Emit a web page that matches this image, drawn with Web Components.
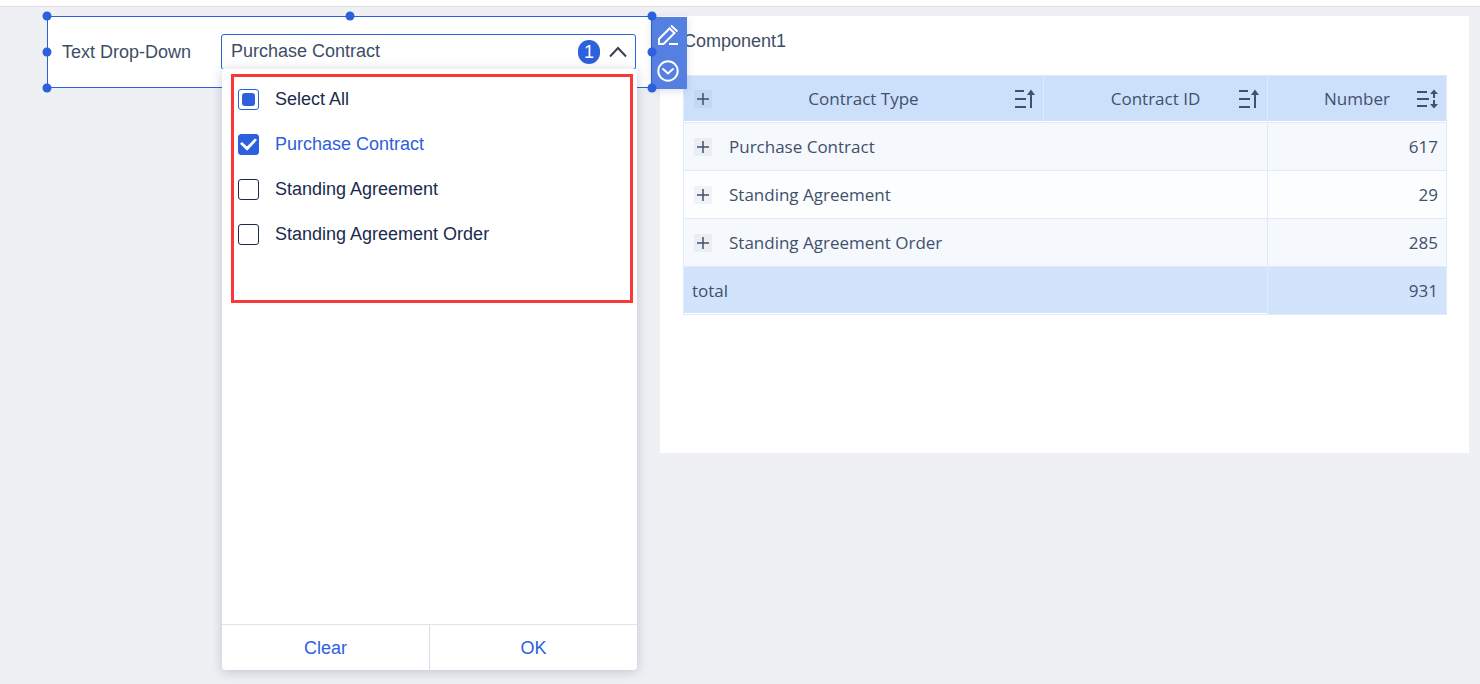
<!DOCTYPE html>
<html lang="en">
<head>
<meta charset="utf-8">
<meta name="viewport" content="width=device-width, initial-scale=1">
<title>Dashboard</title>
<style>
  html, body { height: 100%; }
  body {
    margin: 0;
    background: #eff0f4;
    color: #3d4d66;
    font-family: "Liberation Sans", Arial, sans-serif;
    font-size: 18px;
  }
</style>
</head>
<body>
<dashboard-page>
  <filter-widget slot="filter" label="Text Drop-Down" value="Purchase Contract" count="1">
    <check-option state="mixed">Select All</check-option>
    <check-option state="on">Purchase Contract</check-option>
    <check-option>Standing Agreement</check-option>
    <check-option>Standing Agreement Order</check-option>
  </filter-widget>
  <table-card slot="table">
    <span slot="title">Component1</span>
    <contract-table></contract-table>
  </table-card>
</dashboard-page>

<script>
class DashboardPage extends HTMLElement {
    constructor() {
        super();
        this.attachShadow({mode: "open"}).innerHTML = `
        <style>
        :host { display: block; }
        header {
            height: 6px;
            background: #fff;
            border-bottom: 1px solid #dcdee4;
        }
        main {
            display: grid;
            grid-template-columns: minmax(0, 605fr) minmax(0, 809fr);
            align-items: start;
            gap: 8px;
            padding: 9px 11px 0 47px;
        }
        /* the open menu and the toolbar lie over the card */
        ::slotted([slot="filter"]) { z-index: 1; }
        </style>
        <header></header>
        <main>
            <slot name="filter"></slot>
            <slot name="table"></slot>
        </main>
        `;
    }
}

class CheckOption extends HTMLElement {
    constructor() {
        super();
        this.attachShadow({mode: "open"});
    }

    connectedCallback() {
        this.shadowRoot.innerHTML = `
        <style>
        :host { display: block; color: #1a2b4e; }
        :host([state="on"]) { color: #2c60dc; }
        label {
            display: flex;
            align-items: center;
            gap: 16px;
            height: 45px;
            padding: 0 4px;
            cursor: pointer;
        }
        input {
            appearance: none;
            display: grid;
            place-items: center;
            box-sizing: border-box;
            flex: none;
            width: 21px;
            height: 21px;
            margin: 0;
            border: 1px solid #1a2b4e;
            border-radius: 3px;
            background: #fff;
        }
        input:checked, input:indeterminate { border-color: #2c60dc; }
        input:checked { background: #2c60dc; }
        input:indeterminate::before {
            content: "";
            width: 13px;
            height: 13px;
            border-radius: 3px;
            background: #2c60dc;
        }
        input:checked::before {
            content: "";
            width: 17px;
            height: 13px;
            background: #fff;
            clip-path: polygon(0 44%, 12% 30%, 41% 66%, 88% 4%, 100% 16%, 42% 98%);
        }
        </style>
        <label><input type="checkbox"><span><slot></slot></span></label>
        `;
        const input = this.shadowRoot.querySelector("input");
        input.checked = this.getAttribute("state") === "on";
        input.indeterminate = this.getAttribute("state") === "mixed";
    }
}

class FilterWidget extends HTMLElement {
    constructor() {
        super();
        this.attachShadow({mode: "open"});
    }

    connectedCallback() {
        this.shadowRoot.innerHTML = `
        <style>
        :host {
            display: block;
            position: relative;
        }
        .frame {
            box-sizing: border-box;
            display: grid;
            grid-template-columns: 159px minmax(0, 1fr);
            align-items: center;
            height: 72px;
            padding: 0 15px 0 14px;
            border: 1px solid #2c60dc;
            background: #fff;
        }
        .field {
            position: relative;
            display: grid;
            grid-template-columns: minmax(0, 1fr) 22px 18px;
            align-items: center;
            column-gap: 9px;
            padding-right: 9px;
        }
        select {
            appearance: none;
            box-sizing: border-box;
            grid-area: 1 / 1 / 2 / -1;
            height: 36px;
            margin-right: -9px;
            padding: 0 9px 2px;
            border: 1px solid #2c60dc;
            border-radius: 3px;
            background: #fff;
            color: inherit;
            font: inherit;
        }
        .count {
            grid-area: 1 / 2;
            height: 24px;
            border-radius: 12px;
            background: #2c60dc;
            color: #fff;
            line-height: 24px;
            text-align: center;
            pointer-events: none;
        }
        .arrow { grid-area: 1 / 3; pointer-events: none; }
        .menu {
            position: absolute;
            top: 35px;
            left: 1px;
            right: -1px;
            display: flex;
            flex-direction: column;
            background: #fff;
            border-radius: 0 0 4px 4px;
            box-shadow: 0 2px 12px rgba(40, 60, 90, 0.24);
        }
        .options {
            min-height: 223px;
            margin: 5px 4px 321px 9px;
            border: 3px solid #fb3838;
        }
        .actions {
            display: flex;
            height: 45px;
            border-top: 1px solid #e2e4ec;
        }
        .actions button {
            flex: 1;
            padding: 2px 0 0;
            border: 0;
            background: none;
            color: #2c60dc;
            font: inherit;
            cursor: pointer;
        }
        .actions button + button { border-left: 1px solid #d9dce6; }
        .tools {
            position: absolute;
            top: 1px;
            left: 100%;
            width: 35px;
            display: grid;
            background: #5580e2;
            box-shadow: 0 2px 8px rgba(40, 60, 90, 0.16);
        }
        .tools button {
            display: grid;
            place-items: center;
            height: 36px;
            padding: 0 3px 0 0;
            border: 0;
            background: none;
            cursor: pointer;
        }
        svg { display: block; fill: none; }
        .dot {
            position: absolute;
            width: 9px;
            height: 9px;
            border-radius: 50%;
            background: #2c60dc;
            transform: translate(-50%, -50%);
        }
        .n { top: 0; } .m { top: 50%; } .s { top: 100%; }
        .w { left: 0; } .c { left: 50%; } .e { left: 100%; }
        </style>
        <div class="frame">
            <label for="choice">${this.getAttribute("label")}</label>
            <div class="field">
                <select id="choice"><option>${this.getAttribute("value")}</option></select>
                <span class="count">${this.getAttribute("count")}</span>
                <svg class="arrow" width="18" height="12" viewBox="0 0 18 12" stroke="#3c414b" stroke-width="2"><path d="M1 10.5 9 2l8 8.5"/></svg>
                <div class="menu">
                    <div class="options"><slot></slot></div>
                    <div class="actions">
                        <button type="button">Clear</button>
                        <button type="button">OK</button>
                    </div>
                </div>
            </div>
        </div>
        <div class="tools">
            <button type="button" aria-label="Edit">
                <svg width="22" height="22" viewBox="0 0 22 22" stroke="#fff" stroke-width="2"><path d="M2 20v-5L12.5 4.500l5 4.500L6.500 20zM14 1.500l6.500 6M12 20h9"/></svg>
            </button>
            <button type="button" aria-label="More">
                <svg width="22" height="22" viewBox="0 0 22 22" stroke="#fff" stroke-width="2"><circle cx="11" cy="11" r="9.7"/><path d="m5.500 8.500 5.500 5 5.500-5"/></svg>
            </button>
        </div>
        <i class="dot n w"></i><i class="dot n c"></i><i class="dot n e"></i>
        <i class="dot m w"></i><i class="dot m e"></i>
        <i class="dot s w"></i><i class="dot s e"></i>
        `;
    }
}

class TableCard extends HTMLElement {
    constructor() {
        super();
        this.attachShadow({mode: "open"}).innerHTML = `
        <style>
        :host {
            display: block;
            box-sizing: border-box;
            min-height: 437px;
            padding: 0 22px 24px 23px;
            background: #fff;
        }
        .title {
            height: 59px;
            line-height: 50px;
        }
        </style>
        <div class="title"><slot name="title"></slot></div>
        <slot></slot>
        `;
    }
}

const PLUS = `<button class="plus" type="button" aria-label="Expand"><svg width="18" height="18" viewBox="0 0 18 18" stroke="#42506a" stroke-width="1.500"><path d="M3 9h12M9 3v12"/></svg></button>`;

const SORT_UP = `<svg width="22" height="20" viewBox="0 0 22 20"><path d="M2 2h9M2 10h11M2 18h11" stroke="#42506a" stroke-width="2"/><path d="M17 19V6h-3l4-5.500L22 6h-3v13z" fill="#42506a"/></svg>`;
const SORT_BOTH = `<svg width="22" height="20" viewBox="0 0 22 20"><path d="M1 3h10M1 10h12M1 17h10" stroke="#42506a" stroke-width="2"/><path d="M17 9V5h-3l4-4.500L22 5h-3v4zM17 11v4h-3l4 4.500 4-4.500h-3v-4z" fill="#42506a"/></svg>`;

class ContractTable extends HTMLElement {
    constructor() {
        super();
        this.attachShadow({mode: "open"});
        this.rows = [
            ["Purchase Contract", 617],
            ["Standing Agreement", 29],
            ["Standing Agreement Order", 285]
        ];
    }

    connectedCallback() {
        const total = this.rows.reduce((sum, row) => sum + row[1], 0);
        this.shadowRoot.innerHTML = `
        <style>
        :host {
            display: block;
            color: #42506a;
            font-family: "Open Sans", "Noto Sans", sans-serif;
            font-size: 17px;
        }
        table {
            width: 100%;
            table-layout: fixed;
            border-collapse: separate;
            border-spacing: 0;
            border: solid #dfeafb;
            border-width: 1px 0 0 1px;
        }
        .id { width: 224px; }
        .number { width: 179px; }
        th, td {
            box-sizing: border-box;
            height: 48px;
            padding: 0 8px;
            border: solid #dfeafb;
            border-width: 0 1px 1px 0;
            font-weight: 400;
            text-align: left;
        }
        thead th {
            height: 47px;
            padding-bottom: 1px;
            background: #cce0fc;
            box-shadow: inset 0 -1px #fff;
        }
        tbody tr { background: #fbfdff; }
        tbody tr:nth-child(odd) { background: #f5f8fd; }
        td { text-align: right; }
        tfoot { background: #d2e3fc; }
        tfoot th { box-shadow: inset 0 -1px #fff; }
        .head {
            display: grid;
            grid-template-columns: 1fr auto 1fr;
            align-items: center;
        }
        .head svg { justify-self: end; }
        .name {
            display: flex;
            align-items: center;
            gap: 17px;
        }
        .plus {
            width: 18px;
            height: 18px;
            margin-left: 2px;
            padding: 0;
            border: 0;
            background: rgba(70, 70, 90, 0.06);
        }
        svg { display: block; fill: none; }
        </style>
        <table>
            <colgroup><col><col class="id"><col class="number"></colgroup>
            <thead>
                <tr>
                    <th scope="col"><div class="head">${PLUS}<span>Contract Type</span>${SORT_UP}</div></th>
                    <th scope="col"><div class="head"><i></i><span>Contract ID</span>${SORT_UP}</div></th>
                    <th scope="col"><div class="head"><i></i><span>Number</span>${SORT_BOTH}</div></th>
                </tr>
            </thead>
            <tbody>
                ${this.rows.map(([name, number]) => `
                <tr>
                    <th scope="row" colspan="2"><div class="name">${PLUS}<span>${name}</span></div></th>
                    <td>${number}</td>
                </tr>`).join("")}
            </tbody>
            <tfoot>
                <tr><th scope="row" colspan="2">total</th><td>${total}</td></tr>
            </tfoot>
        </table>
        `;
    }
}

customElements.define("dashboard-page", DashboardPage);
customElements.define("check-option", CheckOption);
customElements.define("filter-widget", FilterWidget);
customElements.define("table-card", TableCard);
customElements.define("contract-table", ContractTable);
</script>
</body>
</html>
